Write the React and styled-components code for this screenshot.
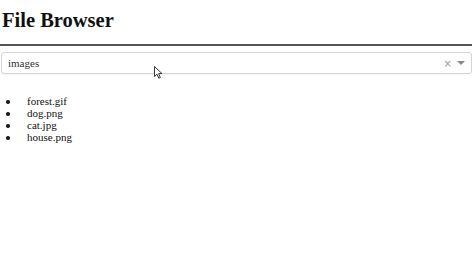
import React from 'react';
import styled, { createGlobalStyle } from 'styled-components';

const GlobalStyle = createGlobalStyle`
  html, body {
    margin: 0;
    padding: 0;
    background: #fff;
  }
  body {
    font-family: "Liberation Serif", "Times New Roman", serif;
    color: #111;
  }
`;

const Page = styled.div`
  position: relative;
  width: 474px;
  height: 265px;
  padding: 0 2px 0 1px;
  box-sizing: border-box;
  overflow: hidden;
`;

const Title = styled.h1`
  margin: 0;
  padding: 8px 0 0 1px;
  font-size: 20.5px;
  font-weight: bold;
  line-height: 24px;
`;

const Rule = styled.hr`
  margin: 12px 0 0 -1px;
  border: none;
  border-top: 2px solid #555;
  height: 0;
`;

const SelectBox = styled.div`
  display: flex;
  align-items: center;
  height: 20px;
  margin-top: 6px;
  border: 1px solid #d4d4d4;
  border-radius: 3px;
  padding: 0 4px 0 6px;
  box-shadow: 0 1px 1px rgba(0, 0, 0, 0.04);
`;

const Value = styled.span`
  flex: 1;
  font-size: 11px;
  color: #333;
`;

const Clear = styled.span`
  font-family: "DejaVu Sans", sans-serif;
  font-size: 10px;
  color: #999;
  margin-right: 5px;
`;

const Caret = styled.span`
  width: 0;
  height: 0;
  border-left: 4px solid transparent;
  border-right: 4px solid transparent;
  border-top: 4px solid #888;
  margin-right: 2px;
`;

const FileList = styled.ul`
  margin: 21px 0 0;
  padding-left: 5px;
  list-style: none;
  font-size: 11px;
  line-height: 12px;
`;

const FileItem = styled.li`
  display: flex;
  align-items: center;

  &::before {
    content: '';
    width: 4px;
    height: 4px;
    border-radius: 50%;
    background: #111;
    margin-right: 17px;
    margin-top: 1px;
  }
`;

const Cursor = styled.svg`
  position: absolute;
  left: 154px;
  top: 66px;
`;

const files = ['forest.gif', 'dog.png', 'cat.jpg', 'house.png'];

export default function App() {
  return (
    <Page>
      <GlobalStyle />
      <Title>File Browser</Title>
      <Rule />
      <SelectBox>
        <Value>images</Value>
        <Clear>×</Clear>
        <Caret />
      </SelectBox>
      <FileList>
        {files.map((f) => (
          <FileItem key={f}>{f}</FileItem>
        ))}
      </FileList>
      <Cursor width="9" height="13" viewBox="0 0 9 13">
        <path d="M0.5 0.5 L0.5 10.5 L3 8.2 L4.8 12.2 L6.3 11.5 L4.6 7.6 L8 7.6 Z" fill="#fff" stroke="#222" strokeWidth="0.9" strokeLinejoin="round" />
      </Cursor>
    </Page>
  );
}
